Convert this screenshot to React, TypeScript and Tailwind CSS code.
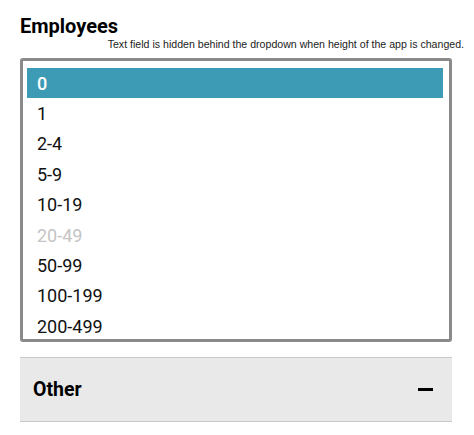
import { useState } from "react";

const options = ["0", "1", "2-4", "5-9", "10-19", "20-49", "50-99", "100-199", "200-499"];
const disabled = ["20-49"];

export default function App() {
  const [selected, setSelected] = useState("0");

  return (
    <main className="min-h-[435px] bg-white px-[20px] pt-[14px] font-['Roboto',sans-serif] text-[#111]">
      <h1 className="text-[20px] leading-[24px] font-bold text-black">Employees</h1>
      <p className="-mr-[10px] text-right font-['Liberation_Sans',Arial,sans-serif] text-[10.6px] leading-[13px] text-[#222]">
        Text field is hidden behind the dropdown when height of the app is changed.
      </p>

      <div className="mt-[7px] h-[284px] w-[432px] overflow-hidden rounded-[3px] border-[3px] border-[#8a8a8a] bg-white pt-[7px] pl-[4px] pr-[6px]">
        <ul>
          {options.map((opt) => {
            const isSel = opt === selected;
            const isOff = disabled.includes(opt);
            return (
              <li
                key={opt}
                onClick={() => !isOff && setSelected(opt)}
                className={
                  isSel
                    ? "flex h-[30.4px] items-center bg-[#3e9bb6] pl-[10px] text-[18px] font-medium text-white"
                    : isOff
                      ? "flex h-[30.4px] items-center pl-[10px] text-[18px] text-[#c4c4c4]"
                      : "flex h-[30.4px] cursor-pointer items-center pl-[10px] text-[18px] text-[#111]"
                }
              >
                {opt}
              </li>
            );
          })}
        </ul>
      </div>

      <div className="mt-[15px] flex h-[65px] w-[432px] items-center justify-between border-y border-[#c9c9c9] bg-[#e9e9e9] pl-[13px] pr-[19px]">
        <span className="text-[19.5px] font-bold text-black">Other</span>
        <span className="h-[3px] w-[15px] bg-black" />
      </div>
    </main>
  );
}
